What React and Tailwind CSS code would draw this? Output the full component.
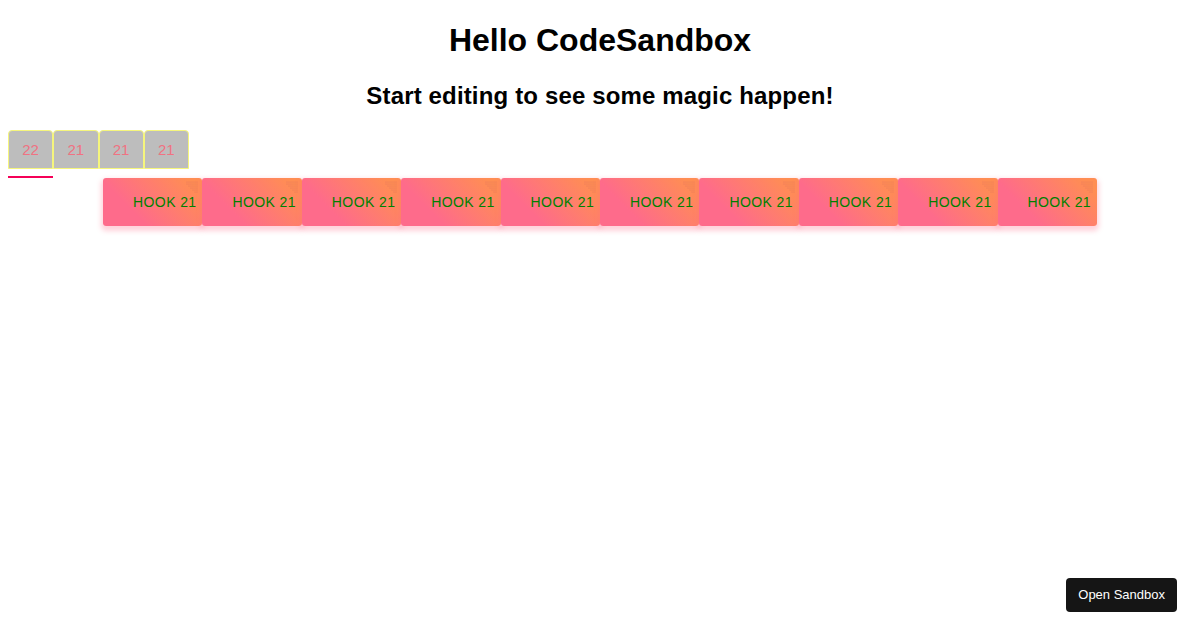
import React, { useState } from "react";

const tabs = ["22", "21", "21", "21"];
const hooks = Array.from({ length: 10 }, () => "HOOK 21");

function Dots() {
  // faint ripple speckle in the top-right corner of each button
  const dots = [];
  for (let r = 0; r < 6; r++) {
    for (let c = 0; c < 6; c++) {
      if (r + (5 - c) > 6) continue;
      dots.push(<circle key={`${r}-${c}`} cx={c * 2 + 1} cy={r * 2 + 1} r="0.6" fill="#c85a6a" />);
    }
  }
  return (
    <svg className="absolute top-[3px] right-[4px] opacity-40" width="12" height="12" viewBox="0 0 12 12">
      {dots}
    </svg>
  );
}

function App() {
  const [active, setActive] = useState(0);

  return (
    <div className="min-h-[630px] bg-white text-center font-['Liberation_Sans',Arial,sans-serif] px-2">
      <h1 className="text-[32px] font-bold text-black pt-[22px] mb-[23px] leading-[37px]">Hello CodeSandbox</h1>
      <h2 className="text-[24px] font-bold text-black mb-[20px] leading-[28px] tracking-[0.15px]">Start editing to see some magic happen!</h2>

      <div className="flex flex-col items-start">
        <div className="flex">
          {tabs.map((t, i) => (
            <button
              key={i}
              onClick={() => setActive(i)}
              className="w-[45.25px] h-[39px] bg-[#bdbdbd] border border-[#f5f57c] rounded-t-[4px] text-[15px] text-[#f07282] leading-none"
            >
              {t}
            </button>
          ))}
        </div>
        <div className="h-[7px]" />
        <div className="flex">
          {tabs.map((t, i) => (
            <div key={i} className={`w-[45.25px] h-[2px] ${i === active ? "bg-[#f50057]" : ""}`} />
          ))}
        </div>
      </div>

      <div className="flex justify-center">
        {hooks.map((h, i) => (
          <button
            key={i}
            className="relative w-[99.4px] h-[48px] rounded-[3px] pl-[30px] text-left text-[14px] tracking-[0.4px] text-[#008000] bg-[linear-gradient(45deg,#FE6B8B_30%,#FF8E53_90%)] shadow-[0_3px_5px_2px_rgba(255,105,135,0.3)] whitespace-nowrap overflow-visible"
          >
            {h}
            <Dots />
          </button>
        ))}
      </div>

      <a
        href="#"
        className="absolute right-[23px] top-[578px] h-[34px] px-[12px] flex items-center rounded-[4px] bg-[#151515] text-white text-[13px]"
      >
        Open Sandbox
      </a>
    </div>
  );
}

export default App;
